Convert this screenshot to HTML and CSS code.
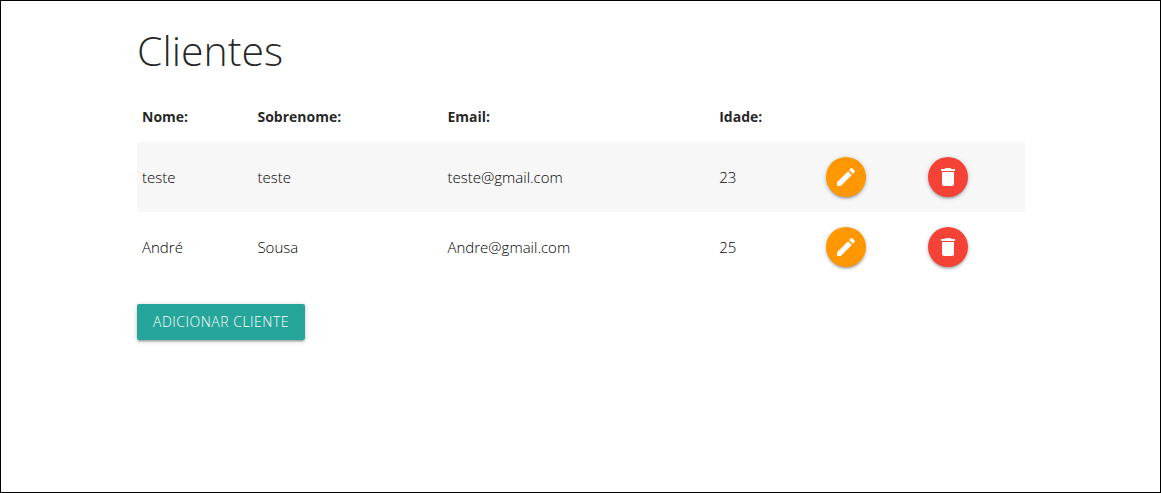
FILE: index.html
```html
<!DOCTYPE html>
<html lang="pt-br">

<head>
	<meta charset="UTF-8">
	<meta name="viewport" content="width=device-width, initial-scale=1.0">
	<title>Clientes</title>
	<link rel="stylesheet" href="styles.css">
</head>

<body>
	<!-- icons used by the table buttons -->
	<svg class="icon-defs" aria-hidden="true">
		<symbol id="icon-edit" viewBox="0 0 24 24">
			<path d="M3 17.25V21h3.75L17.81 9.94l-3.75-3.75L3 17.25zM20.71 7.04c.39-.39.39-1.02 0-1.41l-2.34-2.34c-.39-.39-1.02-.39-1.41 0l-1.83 1.83 3.75 3.75 1.83-1.83z"/>
		</symbol>
		<symbol id="icon-delete" viewBox="0 0 24 24">
			<path d="M6 19c0 1.1.9 2 2 2h8c1.1 0 2-.9 2-2V7H6v12zM19 4h-3.5l-1-1h-5l-1 1H5v2h14V4z"/>
		</symbol>
	</svg>

	<main class="container">
		<h3 class="light">Clientes</h3>

		<table class="striped">
			<colgroup>
				<col class="col-nome">
				<col class="col-sobrenome">
				<col class="col-email">
				<col class="col-idade">
				<col class="col-acao">
				<col class="col-acao">
			</colgroup>
			<thead>
				<tr>
					<th>Nome:</th>
					<th>Sobrenome:</th>
					<th>Email:</th>
					<th>Idade:</th>
					<td></td>
					<td></td>
				</tr>
			</thead>
			<tbody>
				<tr>
					<td>teste</td>
					<td>teste</td>
					<td>teste@gmail.com</td>
					<td>23</td>
					<td><a href="#" class="btn-floating orange" aria-label="Editar"><svg class="icon"><use href="#icon-edit"/></svg></a></td>
					<td><a href="#" class="btn-floating red" aria-label="Excluir"><svg class="icon"><use href="#icon-delete"/></svg></a></td>
				</tr>
				<tr>
					<td>André</td>
					<td>Sousa</td>
					<td>Andre@gmail.com</td>
					<td>25</td>
					<td><a href="#" class="btn-floating orange" aria-label="Editar"><svg class="icon"><use href="#icon-edit"/></svg></a></td>
					<td><a href="#" class="btn-floating red" aria-label="Excluir"><svg class="icon"><use href="#icon-delete"/></svg></a></td>
				</tr>
			</tbody>
		</table>

		<a href="#" class="btn light">Adicionar cliente</a>
	</main>
</body>

</html>
```
FILE: styles.css
```css
* {
	box-sizing: border-box;
}

body {
	margin: 0;
	min-height: 100vh;
	border: 1px solid #000;
	background-color: #fff;
	color: rgba(0, 0, 0, 0.87);
	font-family: "Segoe UI", "Open Sans", "Noto Sans", sans-serif;
	font-size: 14px;
	line-height: 20px;
}

.container {
	width: 90%;
	max-width: 889px;
	margin: 0 auto;
	padding: 24px 0 24px 1px;
}

h3 {
	margin: 0 0 16px;
	font-size: 41px;
	line-height: 51px;
}

.light {
	font-weight: 300;
}

table {
	width: 100%;
	table-layout: fixed;
	border-collapse: collapse;
	margin-bottom: 22px;
}

th,
td {
	padding: 15px 5px;
	text-align: left;
	vertical-align: middle;
}

th {
	font-weight: 700;
}

td {
	color: #000;
	font-size: 15px;
	font-weight: 300;
}

.striped tbody tr:nth-child(odd) {
	background-color: #f7f7f7;
}

.col-nome {
	width: 13%;
}

.col-sobrenome {
	width: 21.4%;
}

.col-email {
	width: 30.6%;
}

.col-idade {
	width: 12%;
}

.col-acao {
	width: 11.5%;
}

.btn,
.btn-floating {
	color: #fff;
	text-decoration: none;
	box-shadow: 0 2px 2px 0 rgba(0, 0, 0, 0.14), 0 3px 1px -2px rgba(0, 0, 0, 0.12), 0 1px 5px 0 rgba(0, 0, 0, 0.2);
}

.btn {
	display: inline-block;
	padding: 0 16px;
	border-radius: 2px;
	background-color: #26a69a;
	line-height: 36px;
	letter-spacing: 0.5px;
	text-transform: uppercase;
}

.btn-floating {
	display: flex;
	align-items: center;
	justify-content: center;
	width: 40px;
	height: 40px;
	border-radius: 50%;
}

.orange {
	background-color: #ff9800;
}

.red {
	background-color: #f44336;
}

.icon {
	width: 24px;
	height: 24px;
	fill: currentColor;
}

.icon-defs {
	display: none;
}
```
